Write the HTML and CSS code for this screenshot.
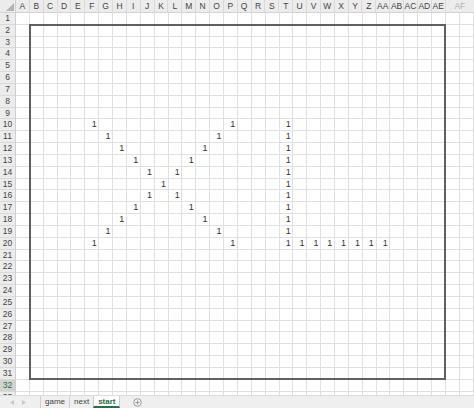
FILE: index.html
```html
<!DOCTYPE html>
<html>
<head>
<meta charset="utf-8">
<link rel="stylesheet" href="styles.css">
</head>
<body>
<div class="app">
  <div class="colheads">
    <div class="corner"><svg width="16" height="13" viewBox="0 0 16 13"><polygon points="14,3 14,11 6,11" fill="#b4b4b4"/></svg></div>
    <div class="ch">A</div><div class="ch">B</div><div class="ch">C</div><div class="ch">D</div><div class="ch">E</div><div class="ch">F</div><div class="ch">G</div><div class="ch">H</div><div class="ch">I</div><div class="ch">J</div><div class="ch">K</div><div class="ch">L</div><div class="ch">M</div><div class="ch">N</div><div class="ch">O</div><div class="ch">P</div><div class="ch">Q</div><div class="ch">R</div><div class="ch">S</div><div class="ch">T</div><div class="ch">U</div><div class="ch">V</div><div class="ch">W</div><div class="ch">X</div><div class="ch">Y</div><div class="ch">Z</div><div class="ch">AA</div><div class="ch">AB</div><div class="ch">AC</div><div class="ch">AD</div><div class="ch">AE</div>
    <div class="ch af">AF</div>
  </div>
  <div class="main">
    <div class="rowheads">
      <div class="rh">1</div><div class="rh">2</div><div class="rh">3</div><div class="rh">4</div><div class="rh">5</div><div class="rh">6</div><div class="rh">7</div><div class="rh">8</div><div class="rh">9</div><div class="rh">10</div><div class="rh">11</div><div class="rh">12</div><div class="rh">13</div><div class="rh">14</div><div class="rh">15</div><div class="rh">16</div><div class="rh">17</div><div class="rh">18</div><div class="rh">19</div><div class="rh">20</div><div class="rh">21</div><div class="rh">22</div><div class="rh">23</div><div class="rh">24</div><div class="rh">25</div><div class="rh">26</div><div class="rh">27</div><div class="rh">28</div><div class="rh">29</div><div class="rh">30</div><div class="rh">31</div><div class="rh sel">32</div><div class="rh">33</div>
    </div>
    <div class="cells">
      <div class="box"></div>
      <div class="v r10 cF">1</div><div class="v r10 cP">1</div><div class="v r10 cT">1</div>
      <div class="v r11 cG">1</div><div class="v r11 cO">1</div><div class="v r11 cT">1</div>
      <div class="v r12 cH">1</div><div class="v r12 cN">1</div><div class="v r12 cT">1</div>
      <div class="v r13 cI">1</div><div class="v r13 cM">1</div><div class="v r13 cT">1</div>
      <div class="v r14 cJ">1</div><div class="v r14 cL">1</div><div class="v r14 cT">1</div>
      <div class="v r15 cK">1</div><div class="v r15 cT">1</div>
      <div class="v r16 cJ">1</div><div class="v r16 cL">1</div><div class="v r16 cT">1</div>
      <div class="v r17 cI">1</div><div class="v r17 cM">1</div><div class="v r17 cT">1</div>
      <div class="v r18 cH">1</div><div class="v r18 cN">1</div><div class="v r18 cT">1</div>
      <div class="v r19 cG">1</div><div class="v r19 cO">1</div><div class="v r19 cT">1</div>
      <div class="v r20 cF">1</div><div class="v r20 cP">1</div><div class="v r20 cT">1</div><div class="v r20 cU">1</div><div class="v r20 cV">1</div><div class="v r20 cW">1</div><div class="v r20 cX">1</div><div class="v r20 cY">1</div><div class="v r20 cZ">1</div><div class="v r20 cAA">1</div>
    </div>
  </div>
  <div class="tabbar">
    <div class="nav">
      <svg width="4" height="5" viewBox="0 0 4 5"><polygon points="4,0 4,5 0,2.5" fill="#c8c8c8"/></svg>
      <svg width="4" height="5" viewBox="0 0 4 5"><polygon points="0,0 0,5 4,2.5" fill="#c8c8c8"/></svg>
    </div>
    <div class="tab">game</div>
    <div class="tab">next</div>
    <div class="tab active">start</div>
    <div class="add"><svg width="9" height="9" viewBox="0 0 9 9"><circle cx="4.5" cy="4.5" r="3.8" fill="none" stroke="#8a8a8a" stroke-width="0.8"/><path d="M4.5 2.5v4M2.5 4.5h4" stroke="#8a8a8a" stroke-width="0.8"/></svg></div>
    <div class="rest"></div>
  </div>
</div>
</body>
</html>
```
FILE: styles.css
```css
html, body {
  margin: 0;
  padding: 0;
  background: #ffffff;
}
body {
  font-family: "Liberation Sans", Arial, sans-serif;
  color: #444444;
}
.app {
  width: 474px;
  height: 408px;
  display: flex;
  flex-direction: column;
  overflow: hidden;
}
.colheads {
  height: 13px;
  flex: none;
  display: flex;
  background: #ececec;
  border-bottom: 1px solid #d4d4d4;
  box-sizing: border-box;
}
.corner {
  width: 16px;
  flex: none;
  border-right: 1px solid #d0d0d0;
  box-sizing: border-box;
}
.corner svg { display: block; }
.ch {
  width: 13.87px;
  flex: none;
  font-size: 8.5px;
  line-height: 12px;
  text-align: center;
  border-right: 1px solid #dadada;
  box-sizing: border-box;
  white-space: nowrap;
  overflow: hidden;
}
.ch.af {
  flex: 1;
  width: auto;
  color: #b0b0b0;
  border-right: none;
}
.main {
  flex: 1;
  display: flex;
  overflow: hidden;
  min-height: 0;
}
.rowheads {
  width: 16px;
  flex: none;
  background: #ececec;
  border-right: 1px solid #cfcfcf;
  box-sizing: border-box;
}
.rh {
  height: 11.83px;
  font-size: 8.5px;
  line-height: 11.83px;
  text-align: center;
  border-bottom: 1px solid #dadada;
  box-sizing: border-box;
}
.rh.sel {
  background: #d2d2d2;
  color: #217346;
}
.cells {
  flex: 1;
  display: grid;
  grid-template-columns: repeat(31, 13.87px) 1fr;
  grid-template-rows: repeat(33, 11.83px);
  background-image:
    repeating-linear-gradient(to right, transparent 0 12.87px, #e0e0e0 12.87px 13.87px),
    repeating-linear-gradient(to bottom, transparent 0 10.83px, #e0e0e0 10.83px 11.83px);
}
.box {
  grid-row: 2 / 32;
  grid-column: 2 / 32;
  border: 2px solid #606060;
  margin: -1px 0 0 -1px;
  box-sizing: border-box;
}
.v {
  font-size: 9px;
  line-height: 11.83px;
  text-align: right;
  padding-right: 2.5px;
  color: #333333;
}
.r10 { grid-row: 10; }
.r11 { grid-row: 11; }
.r12 { grid-row: 12; }
.r13 { grid-row: 13; }
.r14 { grid-row: 14; }
.r15 { grid-row: 15; }
.r16 { grid-row: 16; }
.r17 { grid-row: 17; }
.r18 { grid-row: 18; }
.r19 { grid-row: 19; }
.r20 { grid-row: 20; }
.cF { grid-column: 6; }
.cG { grid-column: 7; }
.cH { grid-column: 8; }
.cI { grid-column: 9; }
.cJ { grid-column: 10; }
.cK { grid-column: 11; }
.cL { grid-column: 12; }
.cM { grid-column: 13; }
.cN { grid-column: 14; }
.cO { grid-column: 15; }
.cP { grid-column: 16; }
.cT { grid-column: 20; }
.cU { grid-column: 21; }
.cV { grid-column: 22; }
.cW { grid-column: 23; }
.cX { grid-column: 24; }
.cY { grid-column: 25; }
.cZ { grid-column: 26; }
.cAA { grid-column: 27; }
.tabbar {
  height: 13px;
  flex: none;
  display: flex;
  background: #efefef;
  border-top: 1px solid #dcdcdc;
  box-sizing: border-box;
  font-size: 8px;
  line-height: 12px;
}
.nav {
  width: 40px;
  flex: none;
  display: flex;
  align-items: center;
  gap: 8px;
  padding-left: 10px;
  box-sizing: border-box;
}
.nav svg { display: block; }
.tab {
  padding: 0 4px;
  border-left: 1px solid #cfcfcf;
  color: #444444;
}
.tab.active {
  background: #ffffff;
  color: #217346;
  font-weight: bold;
  border-bottom: 2px solid #217346;
  border-right: 1px solid #cfcfcf;
  padding: 0 4px;
}
.add {
  padding-left: 13px;
  display: flex;
  align-items: center;
}
.add svg { display: block; }
.rest { flex: 1; }
```
